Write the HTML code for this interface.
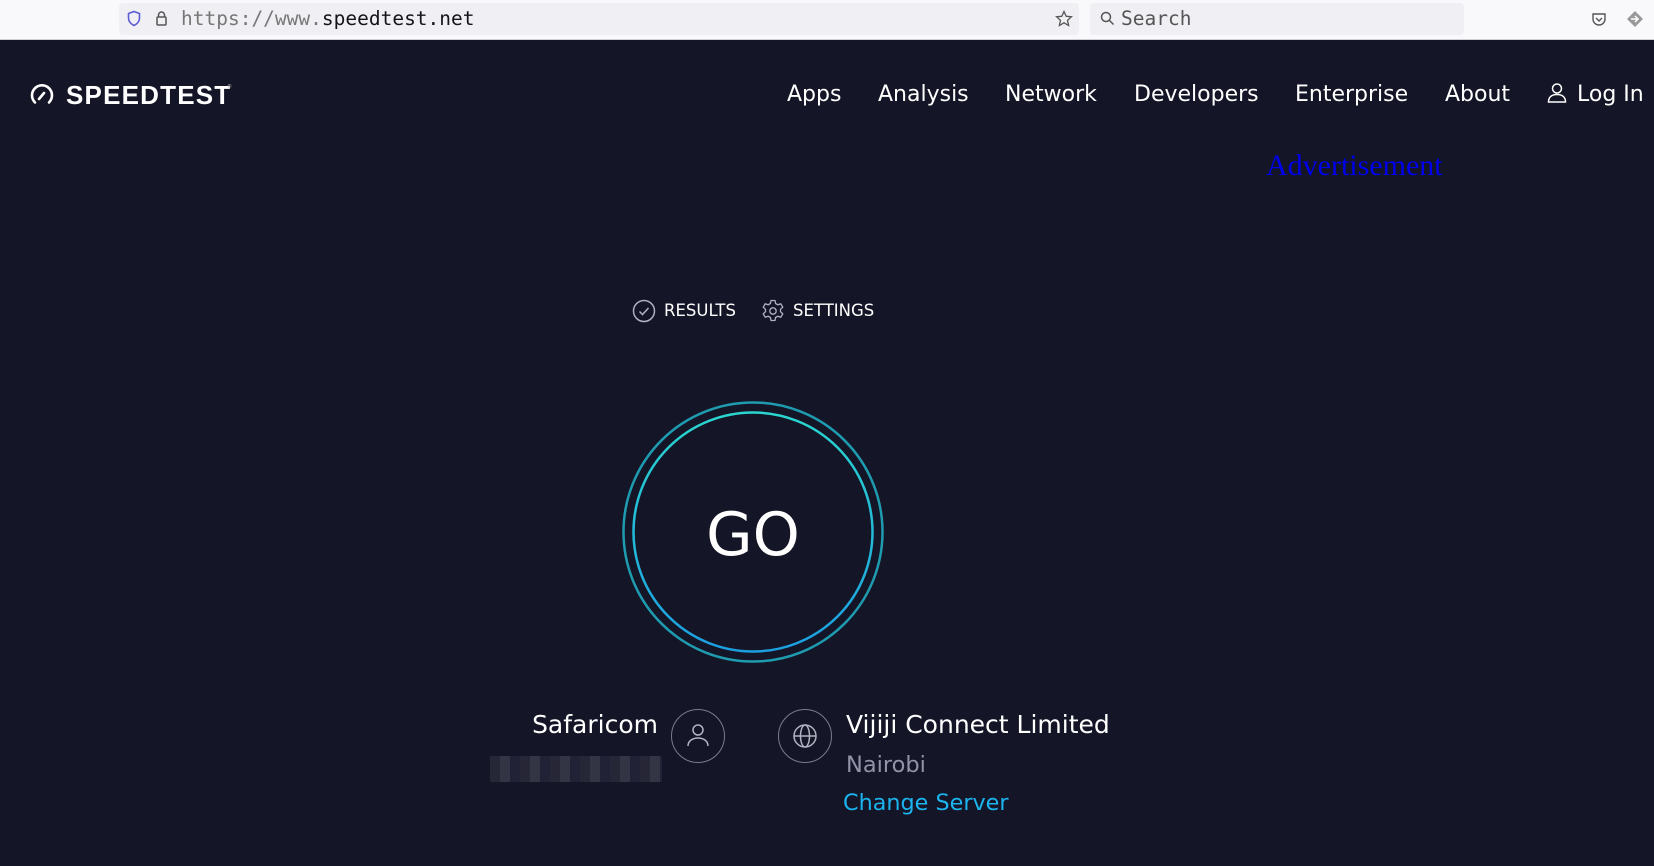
<!DOCTYPE html>
<html><head><meta charset="utf-8"><style>
*{margin:0;padding:0;box-sizing:border-box}
body{width:1654px;height:866px;overflow:hidden;background:#141526;font-family:"DejaVu Sans","Liberation Sans",sans-serif;position:relative;color:#fff}
.bar{position:absolute;left:0;top:0;width:1654px;height:40px;background:#f9f9fb;border-bottom:1px solid #cfcfd8}
.url{position:absolute;left:119px;top:3px;width:960px;height:32px;background:#f0f0f4;border-radius:4px}
.search{position:absolute;left:1090px;top:3px;width:374px;height:32px;background:#f0f0f4;border-radius:4px}
.mono{font-family:"DejaVu Sans Mono","Liberation Mono",monospace;font-size:19.5px;position:absolute;top:7px}
.a{position:absolute;white-space:nowrap}
.nav{font-size:22px;top:82px;color:#fff}
</style></head><body>
<div class="bar">
 <div class="url"></div>
 <svg class="a" style="left:127px;top:10px" width="14" height="17" viewBox="0 0 14 17"><path d="M7 1.5L12.5 3.5V8c0 3.5-2.5 6-5.5 7.5C4 14 1.5 11.5 1.5 8V3.5z" fill="none" stroke="#5b5bd6" stroke-width="1.6"/></svg>
 <svg class="a" style="left:155px;top:10px" width="13" height="17" viewBox="0 0 13 17"><path d="M3.5 7V5a3 3 0 0 1 6 0v2" fill="none" stroke="#555" stroke-width="1.5"/><rect x="2" y="7" width="9" height="8" rx="1" fill="none" stroke="#555" stroke-width="1.5"/></svg>
 <div class="mono" style="left:181px;color:#777">https://www.<span style="color:#15141a">speedtest.net</span></div>
 <svg class="a" style="left:1055px;top:10px" width="18" height="18" viewBox="0 0 18 18"><path d="M9 1.5l2.2 4.8 5.2.5-3.9 3.5 1.1 5.2L9 12.8 4.4 15.5l1.1-5.2L1.6 6.8l5.2-.5z" fill="none" stroke="#555" stroke-width="1.3"/></svg>
 <div class="search"></div>
 <svg class="a" style="left:1100px;top:11px" width="15" height="15" viewBox="0 0 15 15"><circle cx="6" cy="6" r="4.5" fill="none" stroke="#555" stroke-width="1.5"/><path d="M9.5 9.5l4 4" stroke="#555" stroke-width="1.5"/></svg>
 <div class="mono" style="left:1121px;color:#555">Search</div>
 <svg class="a" style="left:1591px;top:11px" width="16" height="16" viewBox="0 0 16 16"><path d="M2 3h12v5a6 6 0 0 1-12 0z" fill="none" stroke="#555" stroke-width="1.4"/><path d="M5 7l3 3 3-3" fill="none" stroke="#555" stroke-width="1.4"/></svg>
 <svg class="a" style="left:1626px;top:10px" width="18" height="18" viewBox="0 0 18 18"><path d="M9 1l8 8-8 8-8-8z" fill="#999"/><path d="M5 9h7M9 6l3 3-3 3" stroke="#fff" stroke-width="1.5" fill="none"/></svg>
</div>

<svg class="a" style="left:30px;top:82px" width="24" height="24" viewBox="0 0 24 24"><path d="M5 20.5A10 10 0 1 1 19 20.5" fill="none" stroke="#fff" stroke-width="2.6" stroke-linecap="round"/><path d="M9 17l5-6" stroke="#fff" stroke-width="2.6" stroke-linecap="round"/></svg>
<div class="a" style="left:66px;top:80px;font-family:'Liberation Sans',sans-serif;font-weight:bold;font-size:26px;letter-spacing:1.2px">SPEEDTEST</div>
<div class="a" style="left:227px;top:84px;font-size:5px;color:#aaa">®</div>

<div class="a nav" style="left:787px">Apps</div>
<div class="a nav" style="left:878px">Analysis</div>
<div class="a nav" style="left:1005px">Network</div>
<div class="a nav" style="left:1134px">Developers</div>
<div class="a nav" style="left:1295px">Enterprise</div>
<div class="a nav" style="left:1445px">About</div>
<svg class="a" style="left:1547px;top:82px" width="20" height="21" viewBox="0 0 20 21"><circle cx="10" cy="6.5" r="4.5" fill="none" stroke="#fff" stroke-width="1.5"/><path d="M1.5 20c0-5 3.5-7.5 8.5-7.5s8.5 2.5 8.5 7.5z" fill="none" stroke="#fff" stroke-width="1.5"/></svg>
<div class="a nav" style="left:1577px">Log In</div>

<div class="a" style="left:1266px;top:149px;font-family:'Liberation Serif',serif;font-size:30px;color:#0000ee">Advertisement</div>

<svg class="a" style="left:632px;top:299px" width="24" height="24" viewBox="0 0 24 24"><circle cx="12" cy="12" r="10.5" fill="none" stroke="#b0b3c2" stroke-width="1.5"/><path d="M7.5 12.5l3 3 6-6.5" fill="none" stroke="#b0b3c2" stroke-width="1.5"/></svg>
<div class="a" style="left:664px;top:301px;font-size:16.5px">RESULTS</div>
<svg class="a" style="left:761px;top:299px" width="24" height="24" viewBox="0 0 24 24"><path d="M10 1.5h4l.6 3 2.3 1.3 2.9-1 2 3.4-2.3 2.1v2.4l2.3 2.1-2 3.4-2.9-1-2.3 1.3-.6 3h-4l-.6-3-2.3-1.3-2.9 1-2-3.4 2.3-2.1v-2.4L2.2 8.2l2-3.4 2.9 1 2.3-1.3z" fill="none" stroke="#b0b3c2" stroke-width="1.3" stroke-linejoin="round"/><circle cx="12" cy="12" r="3.2" fill="none" stroke="#b0b3c2" stroke-width="1.3"/></svg>
<div class="a" style="left:793px;top:301px;font-size:16.5px">SETTINGS</div>

<svg class="a" style="left:620px;top:399px" width="266" height="266" viewBox="0 0 266 266">
<defs><linearGradient id="g" x1="0" y1="0" x2="0" y2="1"><stop offset="0" stop-color="#2ad6cf"/><stop offset="1" stop-color="#1c9fe0"/></linearGradient></defs>
<circle cx="133" cy="133" r="129.5" fill="none" stroke="#1f9bb0" stroke-width="2.5"/>
<circle cx="133" cy="133" r="119.5" fill="none" stroke="url(#g)" stroke-width="2.5"/>
</svg>
<div class="a" style="left:653px;top:497px;width:200px;text-align:center;font-size:60px;line-height:76px">GO</div>

<div class="a" style="left:458px;top:710px;width:200px;text-align:right;font-size:25px">Safaricom</div>
<div class="a" style="left:490px;top:756px;width:172px;height:26px;background:repeating-linear-gradient(90deg,#2a2b3b 0 10px,#3b3c4c 10px 20px,#24253a 20px 30px);opacity:.8"></div>
<div class="a" style="left:671px;top:709px;width:54px;height:54px;border:1.5px solid #7a7c8c;border-radius:50%"></div>
<svg class="a" style="left:685px;top:722px" width="26" height="26" viewBox="0 0 26 26"><circle cx="13" cy="8" r="5" fill="none" stroke="#b0b3c2" stroke-width="1.5"/><path d="M3 24c0-5 4.5-8 10-8s10 3 10 8" fill="none" stroke="#b0b3c2" stroke-width="1.5"/></svg>
<div class="a" style="left:778px;top:709px;width:54px;height:54px;border:1.5px solid #7a7c8c;border-radius:50%"></div>
<svg class="a" style="left:792px;top:723px" width="26" height="26" viewBox="0 0 26 26"><circle cx="13" cy="13" r="11" fill="none" stroke="#b0b3c2" stroke-width="1.5"/><ellipse cx="13" cy="13" rx="4.5" ry="11" fill="none" stroke="#b0b3c2" stroke-width="1.5"/><path d="M2 13h22" stroke="#b0b3c2" stroke-width="1.5"/></svg>
<div class="a" style="left:846px;top:710px;font-size:25px">Vijiji Connect Limited</div>
<div class="a" style="left:846px;top:752px;font-size:22.5px;color:#9193a8">Nairobi</div>
<div class="a" style="left:843px;top:790px;font-size:22.3px;color:#1cb4ef">Change Server</div>
</body></html>
